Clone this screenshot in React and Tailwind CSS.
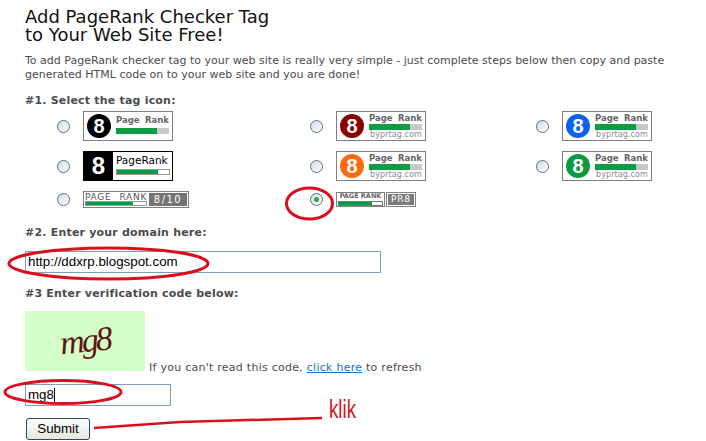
import React from 'react'

const verdana = "font-['DejaVu_Sans',sans-serif]"

function Radio({ checked }) {
  return (
    <span className="w-[13px] h-[13px] shrink-0 rounded-full border border-[#5a7089] bg-gradient-to-br from-[#d5dae2] to-white flex items-center justify-center">
      {checked && <span className="w-[5px] h-[5px] rounded-full bg-[#2fae4a]" />}
    </span>
  )
}

function Bar({ className = '', fill = 'bg-[#0f9a44]', pct = 78, track = 'bg-[#c8c8c8]' }) {
  return (
    <div className={`${track} ${className}`}>
      <div className={`h-full ${fill}`} style={{ width: pct + '%' }} />
    </div>
  )
}

// round number badge, with or without the "by prtag.com" line
function RoundBadge({ color, by = true }) {
  return (
    <div className="w-[90px] h-[30px] border border-[#7f7f7f] bg-white flex items-center px-[3px] gap-[5px]">
      <div className={`w-[24px] h-[24px] rounded-full shrink-0 flex items-center justify-center text-white text-[20px] leading-none font-['Liberation_Sans',sans-serif] font-bold ${color}`}>8</div>
      <div className="flex flex-col flex-1 min-w-0">
        <div className={`flex justify-between text-[8.5px] leading-[10px] font-bold text-[#666] ${verdana} ${by ? '-mt-[1px]' : '-mt-[3px]'}`}>
          <span>Page</span><span>Rank</span>
        </div>
        <Bar className={`h-[6px] ${by ? 'mt-[1px]' : 'mt-[3px]'}`} pct={78} />
        {by && <div className={`text-[8px] leading-[9px] text-[#8a8a8a] tracking-[0.1px] text-right whitespace-nowrap ${verdana}`}>byprtag.com</div>}
      </div>
    </div>
  )
}

function BlackBadge() {
  return (
    <div className="w-[90px] h-[30px] border border-black bg-white flex">
      <div className="w-[29px] bg-black text-white flex items-center justify-center text-[24px] leading-none font-bold font-['Liberation_Sans',sans-serif]">8</div>
      <div className="flex-1 pl-[3px] pr-[2px] pt-[3px]">
        <div className={`text-[10.5px] leading-[11px] text-black whitespace-nowrap ${verdana}`}>PageRank</div>
        <Bar className="h-[6px] mt-[3px] border border-[#999]" track="bg-white" pct={78} />
      </div>
    </div>
  )
}

function TenBadge() {
  return (
    <div className="w-[106px] h-[17px] border border-[#7f7f7f] bg-white flex items-stretch p-[1px]">
      <div className="w-[62px] flex flex-col">
        <div className={`flex justify-between text-[9px] leading-[8px] text-[#555] tracking-[0.7px] ${verdana}`}>
          <span>PAGE</span><span>RANK</span>
        </div>
        <Bar className="h-[5px] border border-[#999]" track="bg-white" pct={78} />
      </div>
      <div className={`flex-1 ml-[2px] bg-[#747474] text-white text-[10px] leading-[13px] text-center tracking-[1.5px] ${verdana}`}>8/10</div>
    </div>
  )
}

function PrBadge() {
  return (
    <div className="w-[80px] h-[15px] flex items-stretch gap-[1px]">
      <div className="w-[49px] border border-[#7f7f7f] flex flex-col px-[1px]">
        <div className={`text-[6.5px] leading-[7px] font-bold text-[#666] text-center whitespace-nowrap ${verdana}`}>PAGE RANK</div>
        <Bar className="h-[5px] mt-[1px] border border-[#777]" track="bg-white" pct={76} />
      </div>
      <div className="flex-1 border border-[#7f7f7f] p-[1px]">
        <div className={`h-full bg-[#7a7a7a] text-white text-[9px] leading-[10px] text-center tracking-[0.8px] ${verdana}`}>PR8</div>
      </div>
    </div>
  )
}

function Option({ checked, children, className = '' }) {
  return (
    <div className={`flex items-center gap-[13px] ${className}`}>
      <Radio checked={checked} />
      {children}
    </div>
  )
}

function Label({ children, className = '' }) {
  return <div className={`text-[11px] leading-[14px] font-bold text-[#4b4b4b] tracking-[0.2px] ${className}`}>{children}</div>
}

export default function App() {
  return (
    <div className={`relative w-[706px] h-[441px] overflow-hidden bg-white pl-[25px] pt-[8px] ${verdana}`}>
      <h1 className="text-[18px] leading-[18px] font-normal text-[#111]">
        Add PageRank Checker Tag<br />to Your Web Site Free!
      </h1>
      <p className="mt-[10px] text-[11px] leading-[14px] text-[#4b4b4b] whitespace-nowrap">
        To add PageRank checker tag to your web site is really very simple - just complete steps below then copy and paste<br />
        generated HTML code on to your web site and you are done!
      </p>

      <Label className="mt-[12px]">#1. Select the tag icon:</Label>

      <div className="mt-[3px] ml-[32px] grid grid-cols-[253px_226px_1fr] grid-rows-[30px_30px_17px] gap-y-[10px]">
        <Option><RoundBadge color="bg-black" by={false} /></Option>
        <Option><RoundBadge color="bg-[#8b0000]" /></Option>
        <Option><RoundBadge color="bg-[#0a62f0]" /></Option>
        <Option><BlackBadge /></Option>
        <Option><RoundBadge color="bg-[#ff6a10]" /></Option>
        <Option><RoundBadge color="bg-[#0b9a40]" /></Option>
        <Option><TenBadge /></Option>
        <Option checked><PrBadge /></Option>
      </div>

      <Label className="mt-[18px]">#2. Enter your domain here:</Label>
      <div className="mt-[11px] w-[356px] h-[22px] border border-[#7f9db9] bg-white pl-[2px] text-[13.33px] leading-[20px] text-black font-['Liberation_Sans',sans-serif]">http://ddxrp.blogspot.com</div>

      <Label className="mt-[14px]">#3 Enter verification code below:</Label>
      <div className="mt-[10px] flex items-end">
        <div className="w-[120px] h-[60px] bg-[#d5fdc9] flex items-center justify-center">
          <span className="text-[#5a1710] text-[34px] leading-none italic font-['Liberation_Serif',serif] tracking-[-3px] -rotate-6">mg8</span>
        </div>
        <span className="ml-[4px] mb-[-4px] text-[11px] leading-[14px] text-[#4b4b4b] tracking-[0.26px] whitespace-nowrap">
          If you can't read this code, <span className="text-[#1a6fc4] underline">click here</span> to refresh
        </span>
      </div>

      <div className="mt-[13px] w-[146px] h-[22px] border border-[#7f9db9] bg-white pl-[2px] text-[13.33px] leading-[20px] text-black font-['Liberation_Sans',sans-serif] flex items-center">
        mg8<span className="w-px h-[15px] bg-black" />
      </div>

      <button className="mt-[12px] ml-[1px] w-[64px] h-[22px] rounded-[3px] border border-[#27496e] bg-gradient-to-b from-white to-[#e6e6dd] text-[13.33px] text-black font-['Liberation_Sans',sans-serif]">
        Submit
      </button>

      {/* red marker scribbles drawn over the page */}
      <svg className="absolute inset-0 pointer-events-none" width="706" height="441" fill="none" stroke="#d9101c" strokeWidth="3">
        <ellipse cx="309.5" cy="203.5" rx="23" ry="15.5" />
        <ellipse cx="108.5" cy="263.5" rx="99.5" ry="15.5" />
        <ellipse cx="63" cy="392" rx="58" ry="11.5" />
        <path d="M94 428 L180 422 L322 418" strokeWidth="2.5" />
      </svg>
      <span className="absolute left-[329px] top-[393px] text-[#d0161c] text-[26px] leading-[32px] font-['Liberation_Sans',sans-serif] origin-left scale-x-[0.72]">klik</span>
    </div>
  )
}
